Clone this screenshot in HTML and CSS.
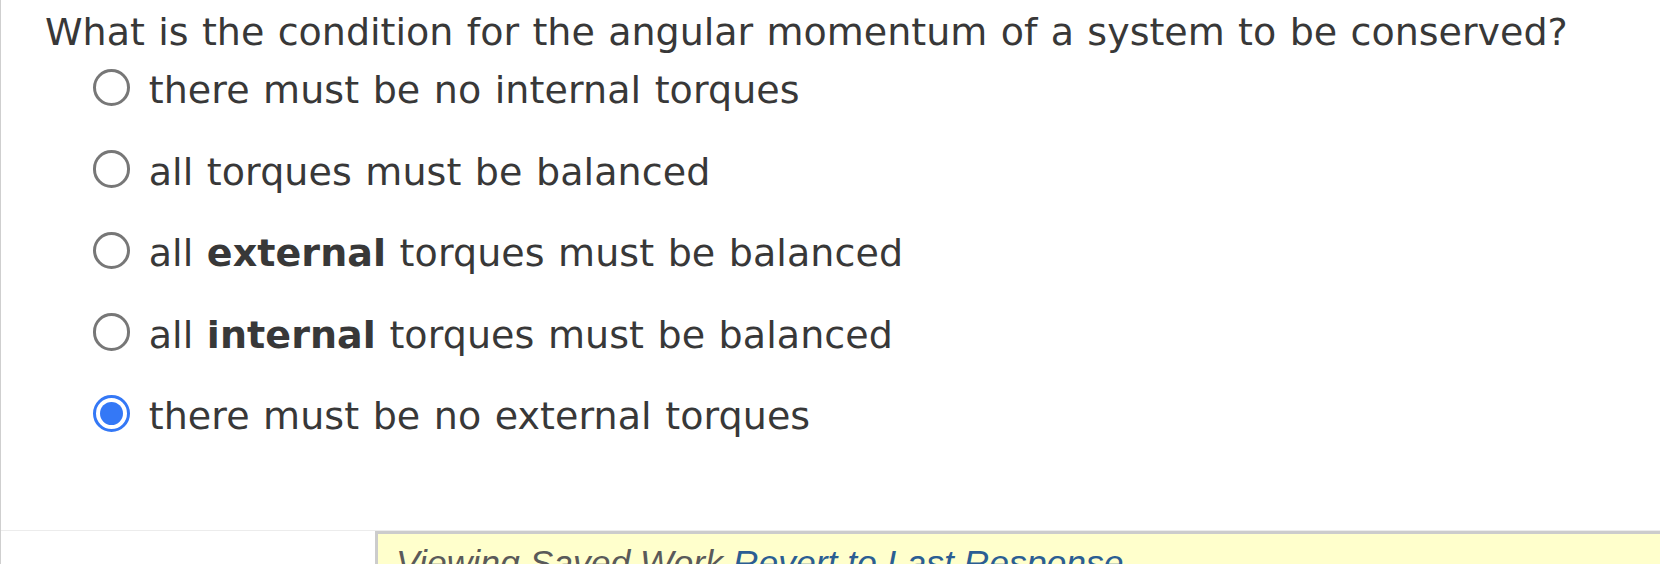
FILE: index.html
```html
<!DOCTYPE html>
<html lang="en">
<head>
<meta charset="utf-8">
<title>Angular momentum question</title>
<link rel="stylesheet" href="styles.css">
</head>
<body>
<div class="page">
  <div class="question">
    <p class="prompt">What is the condition for the angular momentum of a system to be conserved?</p>
    <ul class="options">
      <li class="option"><span class="radio"></span><span class="label">there must be no internal torques</span></li>
      <li class="option"><span class="radio"></span><span class="label">all torques must be balanced</span></li>
      <li class="option"><span class="radio"></span><span class="label">all <b>external</b> torques must be balanced</span></li>
      <li class="option"><span class="radio"></span><span class="label">all <b>internal</b> torques must be balanced</span></li>
      <li class="option"><span class="radio checked"></span><span class="label">there must be no external torques</span></li>
    </ul>
  </div>
  <div class="footer">
    <div class="saved">
      <span class="saved-text">Viewing Saved Work</span> <a class="revert" href="#">Revert to Last Response</a>
    </div>
  </div>
</div>
</body>
</html>
```

FILE: styles.css
```css
html, body {
  margin: 0;
  padding: 0;
  background: #ffffff;
  overflow: hidden;
}

.page {
  border-left: 1px solid #cfcfcf;
  height: 564px;
  box-sizing: border-box;
  overflow: hidden;
}

.question {
  height: 530px;
  box-sizing: border-box;
  padding: 10px 0 0 44px;
  font-family: "DejaVu Sans", Verdana, sans-serif;
  color: #383838;
  word-spacing: 1.3px;
}

.prompt {
  margin: 0;
  font-size: 38px;
  line-height: 44px;
  white-space: nowrap;
}

.options {
  list-style: none;
  margin: 14px 0 0 47.7px;
  padding: 0;
  display: flex;
  flex-direction: column;
  gap: 37.6px;
}

.option {
  display: flex;
  align-items: flex-start;
  font-size: 38px;
  line-height: 44px;
  white-space: nowrap;
}

.label {
  letter-spacing: 0.08px;
}

.radio {
  flex: none;
  width: 37.5px;
  height: 37.5px;
  margin-top: 0.5px;
  margin-right: 18.5px;
  box-sizing: border-box;
  border: 3px solid #777777;
  border-radius: 50%;
  background: #ffffff;
  position: relative;
}

.radio.checked {
  border-color: #3478f6;
  border-width: 3.3px;
}

.radio.checked::after {
  content: "";
  position: absolute;
  left: 4px;
  top: 4px;
  right: 4px;
  bottom: 4px;
  border-radius: 50%;
  background: #3478f6;
}

.label b {
  font-weight: bold;
}

.footer {
  border-top: 1px solid #ececec;
}

.saved {
  margin-left: 374px;
  border-top: 3px solid #cccccc;
  border-left: 3px solid #cccccc;
  background: #ffffcc;
  padding: 9px 0 0 18px;
  height: 60px;
  font-family: "Liberation Sans", Arial, sans-serif;
  font-style: italic;
  font-size: 35.5px;
  white-space: nowrap;
}

.saved-text {
  color: #5a5a5a;
}

.revert {
  color: #2b5e93;
  text-decoration: none;
}
```
